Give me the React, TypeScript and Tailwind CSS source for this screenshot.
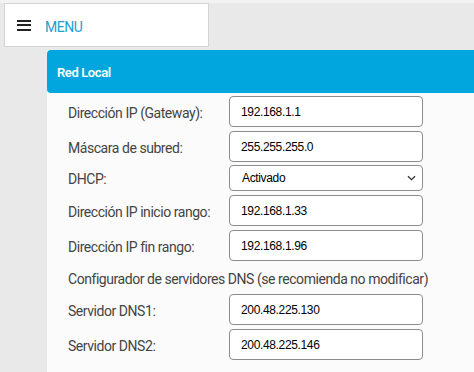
import React from "react";

const labelFont = { fontFamily: 'Roboto, "Noto Sans", sans-serif' };

function Label({ children }: { children: React.ReactNode }) {
  return (
    <div
      className="w-[182px] shrink-0 pl-[21px] pt-[3px] text-[14px] tracking-[-0.45px] text-[#444] whitespace-nowrap"
      style={labelFont}
    >
      {children}
    </div>
  );
}

const inputText =
  "text-[12px] tracking-[-0.35px] text-black font-['Liberation_Sans',sans-serif]";

function Field({ label, value }: { label: string; value: string }) {
  return (
    <div className="flex items-center h-[35px]">
      <Label>{label}</Label>
      <div
        className={
          "w-[194px] shrink-0 h-[31px] border border-[#8d8d8d] rounded-[4px] bg-white flex items-center pl-[11px] " +
          inputText
        }
      >
        {value}
      </div>
    </div>
  );
}

export default function App() {
  return (
    <div className="w-[474px] h-[372px] bg-[#e9e9e9] overflow-hidden flex flex-col">
      <div className="h-[3px] bg-[#f3f3f3]" />
      <div className="flex">
        <div className="ml-[4px] w-[205px] h-[44px] bg-white border border-[#d4d4d4] flex items-center">
          <div className="ml-[12px] flex flex-col gap-[2.5px] w-[14px]">
            <div className="h-[2px] bg-[#222]" />
            <div className="h-[2px] bg-[#222]" />
            <div className="h-[2px] bg-[#222]" />
          </div>
          <span
            className="ml-[14px] mt-[4px] text-[14px] tracking-[-0.5px] text-[#1aa0d2]"
            style={labelFont}
          >
            MENU
          </span>
        </div>
      </div>
      <div className="ml-[47px] mt-[3px] flex-1 flex flex-col bg-[#fbfbfb]">
        <div
          className="h-[43px] bg-[#00a6dd] rounded-l-[4px] flex items-center pl-[10px] pt-[2px] text-white text-[13px] tracking-[-0.4px] font-semibold"
          style={labelFont}
        >
          Red Local
        </div>
        <div className="pt-[1px] flex flex-col">
          <Field label="Dirección IP (Gateway):" value="192.168.1.1" />
          <Field label="Máscara de subred:" value="255.255.255.0" />
          <div className="flex items-center h-[31px] -mt-[2px]">
            <Label>DHCP:</Label>
            <div
              className={
                "w-[194px] shrink-0 h-[26px] border border-[#8d8d8d] rounded-[4px] bg-white flex items-center pl-[12px] pr-[6px] " +
                inputText
              }
            >
              <span className="flex-1">Activado</span>
              <svg width="9" height="6" viewBox="0 0 9 6" fill="none">
                <path d="M1 1.2 L4.5 4.6 L8 1.2" stroke="#333" strokeWidth="1.3" />
              </svg>
            </div>
          </div>
          <Field label="Dirección IP inicio rango:" value="192.168.1.33" />
          <Field label="Dirección IP fin rango:" value="192.168.1.96" />
          <div
            className="h-[29px] flex items-center pl-[21px] pt-[3px] text-[14px] tracking-[-0.45px] text-[#444] whitespace-nowrap"
            style={labelFont}
          >
            Configurador de servidores DNS (se recomienda no modificar)
          </div>
          <Field label="Servidor DNS1:" value="200.48.225.130" />
          <Field label="Servidor DNS2:" value="200.48.225.146" />
        </div>
      </div>
    </div>
  );
}
